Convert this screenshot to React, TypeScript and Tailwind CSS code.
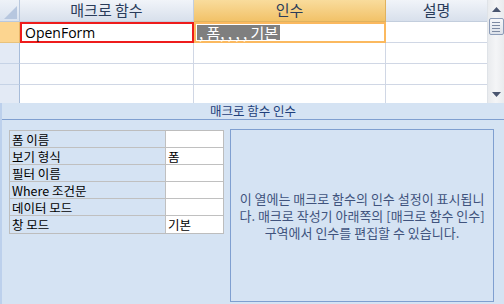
import React from "react";

const font = { fontFamily: '"Open Sans", "Noto Sans CJK KR", sans-serif' };
const kr = { fontFamily: '"Noto Sans CJK KR", "Noto Sans", sans-serif' };

function Selector({ active }: { active?: boolean }) {
  return (
    <div
      className={
        "w-[20px] shrink-0 h-full border-r border-b " +
        (active ? "bg-[#fcd590] border-r-[#e8b86a] border-b-[#e8c27c]" : "bg-[#e3eaf5] border-r-[#a7bcd9] border-b-[#c6d3e6]")
      }
    />
  );
}

function EmptyRow() {
  return (
    <div className="flex h-[21px] shrink-0">
      <Selector />
      <div className="w-[174px] border-r border-b border-[#d0d7e5]" />
      <div className="w-[192px] border-r border-b border-[#d0d7e5]" />
      <div className="w-[101px] border-b border-[#d0d7e5]" />
    </div>
  );
}

function ScrollBar() {
  return (
    <div className="w-[17px] h-full bg-gradient-to-r from-[#e9ebee] via-[#f4f5f7] to-[#e9ebee] border-l border-[#dfe3e8] flex flex-col items-center">
      <div className="h-[18px] flex items-center justify-center">
        <svg width="9" height="5" viewBox="0 0 9 5">
          <path d="M0 5 L4.5 0 L9 5 Z" fill="#4a5670" />
        </svg>
      </div>
      <div className="w-[15px] h-[17px] rounded-[2px] border border-[#8c9cb8] bg-gradient-to-b from-[#f7f8fa] to-[#dde2ea] flex flex-col items-center justify-center gap-[2px]">
        <div className="w-[8px] h-px bg-[#7d8aa3]" />
        <div className="w-[8px] h-px bg-[#7d8aa3]" />
        <div className="w-[8px] h-px bg-[#7d8aa3]" />
        <div className="w-[8px] h-px bg-[#7d8aa3]" />
      </div>
      <div className="flex-1" />
      <div className="h-[18px] flex items-center justify-center">
        <svg width="9" height="5" viewBox="0 0 9 5">
          <path d="M0 0 L9 0 L4.5 5 Z" fill="#4a5670" />
        </svg>
      </div>
    </div>
  );
}

const args: [string, string][] = [
  ["폼 이름", ""],
  ["보기 형식", "폼"],
  ["필터 이름", ""],
  ["Where 조건문", ""],
  ["데이터 모드", ""],
  ["창 모드", "기본"],
];

export default function App() {
  return (
    <div className="w-[504px] h-[304px] overflow-hidden flex flex-col bg-white" style={font}>
      {/* datasheet */}
      <div className="flex h-[103px] shrink-0">
        <div className="w-[487px] flex flex-col overflow-hidden">
          {/* header */}
          <div className="flex h-[22px] shrink-0 text-[15px] text-[#2a3c5a]" style={kr}>
            <div className="w-[20px] shrink-0 relative bg-gradient-to-b from-[#eef2f8] to-[#d9e2ef] border-r border-b border-[#b9c8dd]">
              <svg className="absolute right-[2px] bottom-[2px]" width="13" height="13" viewBox="0 0 13 13">
                <path d="M13 0 L13 13 L0 13 Z" fill="#b7c7df" />
              </svg>
            </div>
            <div className="w-[174px] flex items-center justify-center bg-gradient-to-b from-[#f1f4f9] to-[#d8e0ec] border-r border-b border-[#c3cedd]">
              매크로 함수
            </div>
            <div className="w-[192px] flex items-center justify-center bg-gradient-to-b from-[#f9dc9c] to-[#f2c268] border-r border-b border-[#e0b25e]">
              인수
            </div>
            <div className="w-[101px] flex items-center justify-center bg-gradient-to-b from-[#f1f4f9] to-[#d8e0ec] border-b border-[#c3cedd]">
              설명
            </div>
          </div>
          {/* row 1 */}
          <div className="flex h-[21px] shrink-0">
            <Selector active />
            <div className="w-[174px] border-2 border-[#ee1c1c] flex items-center pl-[3px] text-[14px] text-black leading-none">
              OpenForm
            </div>
            <div className="w-[192px] border-2 border-[#fbb95f] flex items-center pl-[1px] py-[1px]">
              <span className="h-full flex items-center bg-[#7f7f7f] text-white text-[15px] px-[2px] leading-none" style={kr}>
                , 폼, , , , 기본
              </span>
            </div>
            <div className="w-[101px] border-b border-[#d0d7e5]" />
          </div>
          <EmptyRow />
          <EmptyRow />
          <EmptyRow />
        </div>
        <ScrollBar />
      </div>

      {/* argument panel */}
      <div className="flex-1 bg-[#d5e3f3] border-l-2 border-[#bcd0ec] flex flex-col" style={kr}>
        <div className="h-[17px] shrink-0 border-b border-[#7f9fd0] flex items-center justify-center text-[12.5px] text-[#1f3f7a] leading-none">
          매크로 함수 인수
        </div>
        <div className="flex items-start pl-[7px] pt-[9px] gap-[6px]">
          <div className="mt-px w-[215px] border border-[#bdbdbd] flex flex-col">
            {args.map(([k, v], i) => (
              <div key={k} className={"flex h-[17px] overflow-hidden " + (i < args.length - 1 ? "border-b border-[#c0c0c0]" : "")}>
                <div className="w-[156px] overflow-hidden border-r border-[#c0c0c0] flex items-center pl-[2px] text-[12.5px] text-black leading-[15px]">
                  {k}
                </div>
                <div className="flex-1 overflow-hidden bg-white flex items-center pl-[2px] text-[12.5px] text-black leading-[15px]">{v}</div>
              </div>
            ))}
          </div>
          <div className="w-[264px] h-[173px] border border-[#7f9fd0] flex items-center justify-center text-center text-[13px] leading-[17px] text-[#40537d]">
            <p className="whitespace-nowrap">
              이 열에는 매크로 함수의 인수 설정이 표시됩니
              <br />
              다. 매크로 작성기 아래쪽의 [매크로 함수 인수]
              <br />
              구역에서 인수를 편집할 수 있습니다.
            </p>
          </div>
        </div>
      </div>
    </div>
  );
}
